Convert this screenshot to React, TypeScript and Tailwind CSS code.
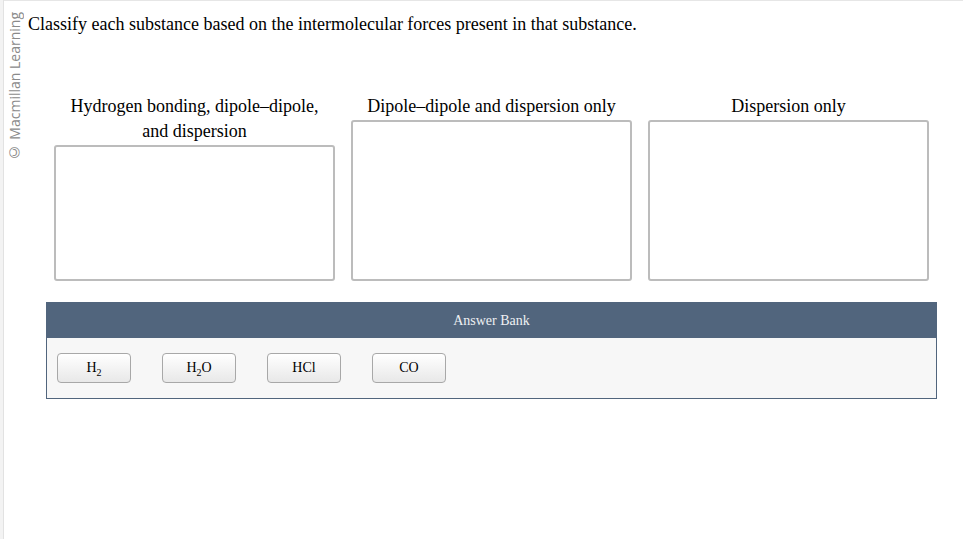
import React from 'react'

const serif = { fontFamily: '"Liberation Serif", "Times New Roman", serif' }

const categories = [
  { label: ['Hydrogen bonding, dipole–dipole,', 'and dispersion'] },
  { label: ['Dipole–dipole and dispersion only'] },
  { label: ['Dispersion only'] },
]

const Sub: React.FC<{ children: React.ReactNode }> = ({ children }) => (
  <span className="relative top-[4px] text-[10px] leading-none">{children}</span>
)

const answers: React.ReactNode[] = [
  <>H<Sub>2</Sub></>,
  <>H<Sub>2</Sub>O</>,
  <>HCl</>,
  <>CO</>,
]

export default function App() {
  return (
    <div className="flex min-h-[539px] w-full bg-white text-black" style={serif}>
      <div className="w-[4px] shrink-0 border-r border-[#e2e2e2] bg-[#f3f3f3]" />
      <div className="flex flex-1 border-t border-[#e6e6e6]">
        <div className="w-[23px] shrink-0 pl-[3px]">
          <div
            className="mt-[11px] rotate-180 text-[14px] leading-[15px] text-[#8a8a8a] [writing-mode:vertical-rl]"
            style={{ fontFamily: '"Open Sans", "Noto Sans", sans-serif' }}
          >
            © Macmillan Learning
          </div>
        </div>
        <div className="flex-1">
          <p className="pl-px pt-[12px] text-[18px] leading-[22px]">
            Classify each substance based on the intermolecular forces present in that substance.
          </p>

          <div className="ml-[19px] mt-[59px] w-[891px]">
            <div className="grid grid-cols-3 gap-4 px-[8px]">
              {categories.map((c, i) => (
                <div key={i} className="flex flex-col">
                  <div className="pb-px text-center text-[18px] leading-[25px]">
                    {c.label.map((l, j) => (
                      <div key={j}>{l}</div>
                    ))}
                  </div>
                  <div className="min-h-[136px] flex-1 rounded-[3px] border-2 border-[#bcbcbc] bg-white" />
                </div>
              ))}
            </div>

            <div className="mt-[21px] border border-[#51657d]">
              <div className="flex h-[35px] items-center justify-center bg-[#51657d] text-[14px] text-[#eef0f3]">
                Answer Bank
              </div>
              <div className="flex gap-[31px] bg-[#f7f7f7] px-[10px] py-[15px]">
                {answers.map((a, i) => (
                  <div
                    key={i}
                    className="flex h-[30px] w-[74px] items-center justify-center rounded-[4px] border border-[#a8a8a8] bg-gradient-to-b from-white to-[#e8e8e8] pb-[2px] text-[14px]"
                  >
                    <span>{a}</span>
                  </div>
                ))}
              </div>
            </div>
          </div>
        </div>
      </div>
    </div>
  )
}
